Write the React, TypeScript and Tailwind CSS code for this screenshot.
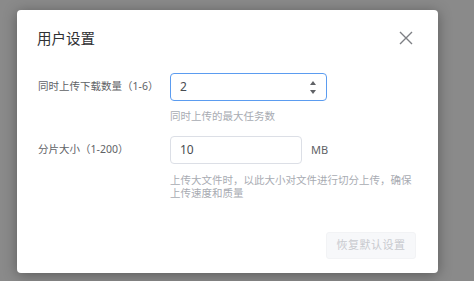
import { useState } from 'react'

export default function App() {
  const [count, setCount] = useState('2')
  const [chunk, setChunk] = useState('10')

  return (
    <div className="h-screen w-full overflow-hidden bg-[#8a8a8a] pt-[10px] pl-[17px]" style={{ fontFamily: '"Noto Sans", "Noto Sans CJK SC", sans-serif' }}>
      <div className="flex h-[263px] w-[421px] flex-col rounded-[4px] bg-white shadow-[0_2px_14px_rgba(0,0,0,0.35)]">
        <header className="flex items-center justify-between pt-[18px] pl-[20px] pr-[25px]">
          <h2 className="text-[14.5px] leading-[20px] text-[#303133]">用户设置</h2>
          <button className="flex h-[14px] w-[14px] items-center justify-center text-[#7d7f84]">
            <svg width="14" height="14" viewBox="0 0 14 14" fill="none" stroke="currentColor" strokeWidth="1.4">
              <path d="M1 1 L13 13 M13 1 L1 13" />
            </svg>
          </button>
        </header>

        <main className="flex flex-col gap-[13px] pt-[25px] pl-[21px]">
          <div className="flex">
            <label className="flex h-[28px] w-[132px] items-center text-[10.5px] text-[#606266]">同时上传下载数量（1-6）</label>
            <div className="flex flex-col">
              <div className="flex h-[28px] w-[157px] items-center justify-between rounded-[4px] border border-[#5b9cf0] pl-[9px] pr-[10px]">
                <input
                  value={count}
                  onChange={(e) => setCount(e.target.value)}
                  className="w-[100px] bg-transparent text-[12px] text-[#4a4d52] outline-none"
                />
                <div className="flex flex-col gap-[5px]">
                  <svg width="6" height="4" viewBox="0 0 6 4"><path d="M3 0 L6 4 L0 4 Z" fill="#606266" /></svg>
                  <svg width="6" height="4" viewBox="0 0 6 4"><path d="M0 0 L6 0 L3 4 Z" fill="#606266" /></svg>
                </div>
              </div>
              <p className="mt-[9px] text-[10.5px] leading-[13px] text-[#a8abb2]">同时上传的最大任务数</p>
            </div>
          </div>

          <div className="flex">
            <label className="flex h-[28px] w-[132px] items-center text-[10.5px] text-[#606266]">分片大小（1-200）</label>
            <div className="flex flex-col">
              <div className="flex items-center gap-[9px]">
                <div className="flex h-[28px] w-[132px] items-center rounded-[4px] border border-[#dcdfe6] pl-[9px]">
                  <input
                    value={chunk}
                    onChange={(e) => setChunk(e.target.value)}
                    className="w-[100px] bg-transparent text-[12px] text-[#4a4d52] outline-none"
                  />
                </div>
                <span className="text-[11px] text-[#606266]">MB</span>
              </div>
              <p className="mt-[10px] w-[246px] text-[10.5px] leading-[13px] text-[#a8abb2]">
                上传大文件时，以此大小对文件进行切分上传，确保上传速度和质量
              </p>
            </div>
          </div>
        </main>

        <footer className="mt-auto flex justify-end pr-[22px] pb-[14px]">
          <button disabled className="h-[27px] w-[90px] rounded-[3px] border border-[#f2f3f5] bg-[#f7f8fa] text-[11px] tracking-[0.5px] text-[#c8cacf]">
            恢复默认设置
          </button>
        </footer>
      </div>
    </div>
  )
}
